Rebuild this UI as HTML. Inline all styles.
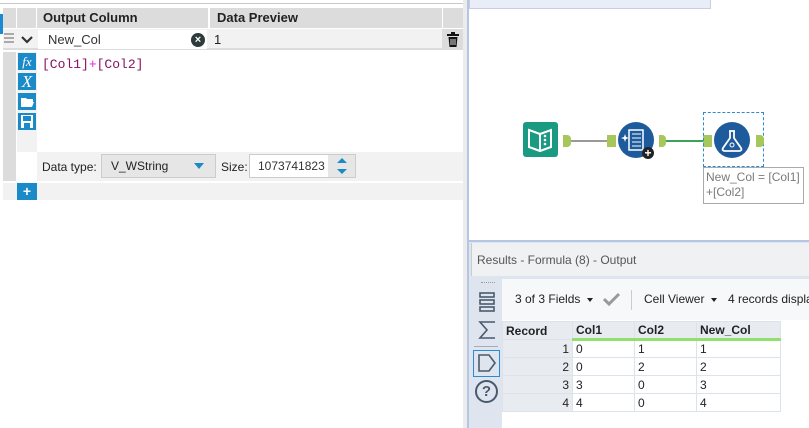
<!DOCTYPE html>
<html><head><style>
*{box-sizing:border-box;margin:0;padding:0}
body{width:809px;height:428px;overflow:hidden;background:#fff;font-family:"Liberation Sans",sans-serif;position:relative;font-size:12px;color:#222}
.a{position:absolute}
td{border:1px solid #dde3ea;height:18px;padding:0 3px;font-size:12px}
</style></head><body>
<!-- left panel -->
<div class="a" style="left:0;top:0;width:466px;height:4px;border-bottom:1px solid #c8c8c8"></div>
<div class="a" style="left:0;top:14px;width:3px;height:20px;background:#1c8ad1"></div>
<div class="a" style="left:3px;top:8px;width:460px;height:20px;background:#dcdcdc"></div>
<div class="a" style="left:16px;top:8px;width:1px;height:192px;background:#fff"></div>
<div class="a" style="left:36px;top:8px;width:1px;height:20px;background:#fff"></div>
<div class="a" style="left:208px;top:8px;width:2px;height:20px;background:#fff"></div>
<div class="a" style="left:442px;top:8px;width:1px;height:20px;background:#fff"></div>
<div class="a" style="left:43px;top:10px;font-weight:bold;font-size:13px">Output Column</div>
<div class="a" style="left:217px;top:10px;font-weight:bold;font-size:13px">Data Preview</div>
<div class="a" style="left:3px;top:29px;width:460px;height:21px;background:#f2f2f2;border-bottom:2px solid #dcdcdc"></div>
<div class="a" style="left:4px;top:33px;width:10px;height:12px;background:repeating-linear-gradient(#aaa 0 2px,transparent 2px 4px)"></div>
<svg class="a" style="left:20px;top:35px" width="14" height="10"><path d="M2 2l5 5 5-5" stroke="#333" stroke-width="2.2" fill="none"/></svg>
<div class="a" style="left:38px;top:30px;width:169px;height:19px;background:#fff"></div>
<div class="a" style="left:48px;top:32px;font-size:13px;color:#333">New_Col</div>
<div class="a" style="left:191px;top:33px;width:14px;height:14px;border-radius:50%;background:#2d3b3b;color:#fff;font-size:11px;font-weight:bold;text-align:center;line-height:14px">×</div>
<div class="a" style="left:214px;top:32px;font-size:13px">1</div>
<div class="a" style="left:442px;top:29px;width:21px;height:20px;background:#dcdcdc"></div>
<svg class="a" style="left:446px;top:31px" width="14" height="17"><rect x="1" y="3" width="12" height="2" fill="#111"/><rect x="5" y="1" width="4" height="2" fill="#111"/><path d="M2.5 6h9l-1 10h-7z" fill="#111"/><path d="M5 8v6M7 8v6M9 8v6" stroke="#dcdcdc"/></svg>
<div class="a" style="left:3px;top:52px;width:13px;height:148px;background:#dcdcdc"></div>
<div class="a" style="left:17px;top:52px;width:20px;height:100px;background:#f2f2f2"></div>
<div class="a" style="left:18px;top:53px;width:18px;height:17px;background:#1b8ac9;color:#fff;font-family:'Liberation Serif',serif;font-style:italic;font-size:13px;text-align:center;line-height:17px">fx</div>
<div class="a" style="left:18px;top:73px;width:18px;height:17px;background:#1b8ac9;color:#fff;font-family:'Liberation Serif',serif;font-style:italic;font-size:17px;text-align:center;line-height:17px">X</div>
<div class="a" style="left:18px;top:93px;width:18px;height:17px;background:#1b8ac9"><svg width="18" height="17"><path d="M3 5h5l1 1h6v3H6l-3 5z" fill="#fff"/><path d="M6 9h10l-2 5H3z" fill="#fff"/></svg></div>
<div class="a" style="left:18px;top:113px;width:18px;height:17px;background:#1b8ac9"><svg width="18" height="17"><rect x="3" y="2" width="12" height="13" fill="#fff"/><rect x="5" y="3" width="8" height="5" fill="#1b8ac9"/><rect x="6" y="10" width="6" height="5" fill="#1b8ac9"/></svg></div>
<div class="a" style="left:42px;top:57px;font-family:'Liberation Mono',monospace;font-size:13px;color:#8a1060">[Col1]<span style="color:#e020e0">+</span>[Col2]</div>
<div class="a" style="left:37px;top:152px;width:426px;height:29px;background:#f2f2f2"></div>
<div class="a" style="left:42px;top:160px;font-size:12px">Data type:</div>
<div class="a" style="left:101px;top:154px;width:115px;height:24px;background:#e6e6e6;border:1px solid #ccc"></div>
<div class="a" style="left:111px;top:159px;font-size:12px">V_WString</div>
<svg class="a" style="left:194px;top:163px" width="10" height="6"><path d="M0 0h10L5 6z" fill="#1b8ac9"/></svg>
<div class="a" style="left:221px;top:160px;font-size:12px">Size:</div>
<div class="a" style="left:249px;top:154px;width:107px;height:24px;background:#fff;border:1px solid #ccc"></div>
<div class="a" style="left:258px;top:159px;font-size:12px;color:#333">1073741823</div>
<div class="a" style="left:328px;top:155px;width:27px;height:22px;background:#e6e6e6"></div>
<svg class="a" style="left:336px;top:157px" width="12" height="18"><path d="M1 6l5-5 5 5zM1 12l5 5 5-5z" fill="#1b8ac9"/></svg>
<div class="a" style="left:3px;top:181px;width:460px;height:19px;background:#f2f2f2;border-top:2px solid #fff"></div>
<div class="a" style="left:17px;top:183px;width:20px;height:17px;background:#1b8ac9;color:#fff;font-weight:bold;text-align:center;line-height:17px;font-size:14px">+</div>
<div class="a" style="left:463px;top:0;width:4px;height:428px;background:#ececec"></div>
<div class="a" style="left:467px;top:0;width:2px;height:428px;background:#b4c6e4"></div>
<!-- canvas -->
<div class="a" style="left:469px;top:0;width:242px;height:9px;background:#e8edf7;border:1px solid #c6cfe0;border-top:none"></div>
<div class="a" style="left:523px;top:122px;width:35px;height:35px;background:#1b9a82;border-radius:3px"><svg width="35" height="35"><path d="M6 8l11 4 11-4v17l-11 4-11-4z" fill="none" stroke="#fff" stroke-width="2"/><path d="M17 12v17" stroke="#fff" stroke-width="2"/><circle cx="22" cy="14" r="1.3" fill="#fff"/><circle cx="22" cy="18" r="1.3" fill="#fff"/><circle cx="22" cy="22" r="1.3" fill="#fff"/></svg></div>
<div class="a" style="left:563px;top:135px;width:8px;height:12px;background:#a6c85a;border-radius:0 4px 4px 0"></div>
<div class="a" style="left:571px;top:140px;width:37px;height:2px;background:#999"></div>
<div class="a" style="left:607px;top:135px;width:9px;height:12px;background:#a6c85a"></div>
<div class="a" style="left:618px;top:122px;width:36px;height:36px;border-radius:50%;background:#1d5b9c"><svg width="36" height="36"><path d="M11 8h14v20H11z" fill="none" stroke="#fff" stroke-width="1.5"/><path d="M14 12h9M14 16h9M14 20h9M14 24h9" stroke="#fff"/><path d="M7 12l1 3 3 1-3 1-1 3-1-3-3-1 3-1z" fill="#fff"/></svg></div>
<div class="a" style="left:642px;top:147px;width:12px;height:12px;border-radius:50%;background:#222;color:#fff;font-size:12px;font-weight:bold;text-align:center;line-height:12px">+</div>
<div class="a" style="left:659px;top:135px;width:7px;height:12px;background:#a6c85a;border-radius:0 4px 4px 0"></div>
<div class="a" style="left:666px;top:140px;width:38px;height:2px;background:#3da35a"></div>
<div class="a" style="left:703px;top:135px;width:9px;height:12px;background:#a6c85a"></div>
<div class="a" style="left:703px;top:112px;width:61px;height:55px;border:1px dashed #2a8ad4"></div>
<div class="a" style="left:714px;top:122px;width:36px;height:36px;border-radius:50%;background:#1d5b9c"><svg width="36" height="36"><path d="M15 9h6M16 9v7l-7 10c-1 2 0 3 2 3h14c2 0 3-1 2-3l-7-10V9" fill="none" stroke="#fff" stroke-width="1.8"/><circle cx="18" cy="23" r="2" fill="none" stroke="#fff"/></svg></div>
<div class="a" style="left:756px;top:135px;width:8px;height:12px;background:#a6c85a;border-radius:0 4px 4px 0"></div>
<div class="a" style="left:703px;top:167px;width:101px;height:37px;background:#fff;border:1px solid #aaa;color:#7a7a7a;font-size:12px;line-height:15px;padding:2px 2px">New_Col = [Col1]<br>+[Col2]</div>
<!-- results -->
<div class="a" style="left:469px;top:240px;width:340px;height:188px;background:#dfe5ee;border-top:2px solid #b4c6e4"></div>
<div class="a" style="left:471px;top:243px;width:338px;height:33px;background:#f0f1f3;border-left:1px solid #ccc"></div>
<div class="a" style="left:477px;top:253px;font-size:12px;color:#555">Results - Formula (8) - Output</div>
<div class="a" style="left:502px;top:279px;width:307px;height:149px;background:#fff"></div>
<div class="a" style="left:502px;top:279px;width:307px;height:41px;background:#f7f8fa"></div>
<div class="a" style="left:481px;top:282px;width:14px;height:1px;border-top:1px dotted #999"></div>
<svg class="a" style="left:478px;top:292px" width="18" height="20"><rect x="2" y="1" width="14" height="4" fill="none" stroke="#4a5a6e" stroke-width="1.6"/><rect x="2" y="8" width="14" height="4" fill="none" stroke="#4a5a6e" stroke-width="1.6"/><rect x="2" y="15" width="14" height="4" fill="none" stroke="#4a5a6e" stroke-width="1.6"/></svg>
<svg class="a" style="left:478px;top:320px" width="18" height="20"><path d="M17 2H2l7 8-7 8h15" fill="none" stroke="#4a5a6e" stroke-width="1.6"/></svg>
<div class="a" style="left:474px;top:346px;width:24px;height:1px;background:#aab"></div>
<div class="a" style="left:473px;top:350px;width:27px;height:27px;border:1px solid #2a8ad4"><svg width="25" height="25"><path d="M5 4h10l6 8-6 8H5z" fill="none" stroke="#4a5a6e" stroke-width="1.6"/></svg></div>
<div class="a" style="left:475px;top:380px;width:23px;height:23px;border:2px solid #4a5a6e;border-radius:50%;text-align:center;font-weight:bold;color:#4a5a6e;font-size:15px;line-height:19px">?</div>
<div class="a" style="left:515px;top:292px;font-size:12px">3 of 3 Fields</div>
<svg class="a" style="left:587px;top:298px" width="6" height="4"><path d="M0 0h6L3 4z" fill="#222"/></svg>
<svg class="a" style="left:603px;top:292px" width="18" height="14"><path d="M1 7l5 5 10-10" stroke="#999" stroke-width="3" fill="none"/></svg>
<div class="a" style="left:631px;top:290px;width:1px;height:20px;background:#ccc"></div>
<div class="a" style="left:644px;top:292px;font-size:12px">Cell Viewer</div>
<svg class="a" style="left:711px;top:298px" width="6" height="4"><path d="M0 0h6L3 4z" fill="#222"/></svg>
<div class="a" style="left:728px;top:292px;font-size:12px;white-space:nowrap">4 records displa</div>
<table class="a" style="left:502px;top:321px;border-collapse:collapse;width:279px">
<tr style="background:#e8ecf1;font-weight:bold"><td style="width:70px">Record</td><td style="width:62px;border-bottom:3px solid #90e070">Col1</td><td style="width:62px;border-bottom:3px solid #90e070">Col2</td><td style="border-bottom:3px solid #90e070">New_Col</td></tr>
<tr><td style="text-align:right;background:#e8ecf1">1</td><td>0</td><td>1</td><td>1</td></tr>
<tr><td style="text-align:right;background:#e8ecf1">2</td><td>0</td><td>2</td><td>2</td></tr>
<tr><td style="text-align:right;background:#e8ecf1">3</td><td>3</td><td>0</td><td>3</td></tr>
<tr><td style="text-align:right;background:#e8ecf1">4</td><td>4</td><td>0</td><td>4</td></tr>
</table>
</body></html>
